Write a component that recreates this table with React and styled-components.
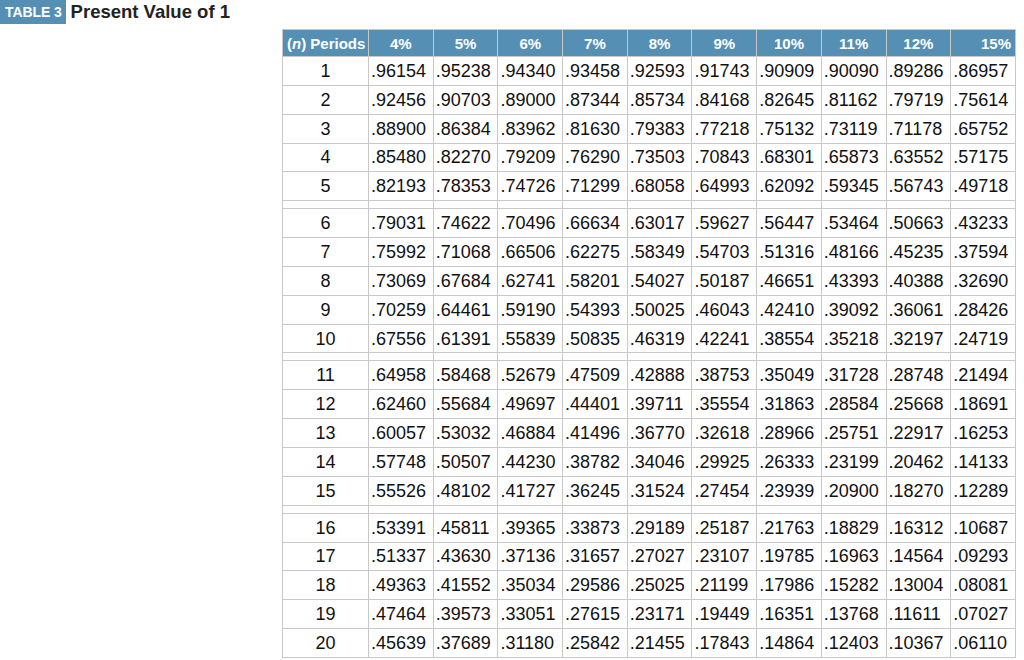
import styled, { createGlobalStyle } from "styled-components";

const GlobalStyle = createGlobalStyle`
  body {
    margin: 0;
    background: #ffffff;
    font-family: "Liberation Sans", Arial, Helvetica, sans-serif;
    color: #111;
  }
`;

const Page = styled.div`
  display: flex;
  flex-direction: column;
  gap: 5px;
  padding: 0 8px 0 0;
`;

const TitleBar = styled.div`
  display: flex;
  align-items: center;
  gap: 5px;
  height: 24px;
`;

const TableLabel = styled.span`
  display: flex;
  align-items: center;
  height: 24px;
  padding: 0 4px 0 5px;
  background: #5590b4;
  color: #fff;
  font-weight: bold;
  font-size: 14px;
  letter-spacing: -0.1px;
`;

const TitleText = styled.h1`
  margin: 0;
  font-size: 18.5px;
  font-weight: bold;
  color: #222;
`;

const Table = styled.table`
  margin-left: auto;
  width: 734px;
  border-collapse: collapse;
  table-layout: fixed;
  border: 1px solid #c8c8c8;
`;

const HeadCell = styled.th`
  height: 26px;
  padding: 0 4px;
  background: #5590b4;
  color: #fff;
  font-size: 15px;
  font-weight: bold;
  border: 1px solid #c8c8c8;
  text-align: ${(p) => p.$align || "center"};
  white-space: nowrap;
`;

const Row = styled.tr`
  height: 28.85px;
`;

const Cell = styled.td`
  font-size: 18px;
  border: 1px solid #c8c8c8;
  text-align: ${(p) => (p.$center ? "center" : "left")};
  white-space: nowrap;
  padding: 1px 0 0 ${(p) => (p.$center ? "0" : "2px")};
`;

const SpacerRow = styled.tr`
  height: 8px;
`;

const SpacerCell = styled.td`
  padding: 0;
  border: 1px solid #c8c8c8;
`;

const rates = ["4%", "5%", "6%", "7%", "8%", "9%", "10%", "11%", "12%", "15%"];

const data = [
  ".96154 .95238 .94340 .93458 .92593 .91743 .90909 .90090 .89286 .86957",
  ".92456 .90703 .89000 .87344 .85734 .84168 .82645 .81162 .79719 .75614",
  ".88900 .86384 .83962 .81630 .79383 .77218 .75132 .73119 .71178 .65752",
  ".85480 .82270 .79209 .76290 .73503 .70843 .68301 .65873 .63552 .57175",
  ".82193 .78353 .74726 .71299 .68058 .64993 .62092 .59345 .56743 .49718",
  ".79031 .74622 .70496 .66634 .63017 .59627 .56447 .53464 .50663 .43233",
  ".75992 .71068 .66506 .62275 .58349 .54703 .51316 .48166 .45235 .37594",
  ".73069 .67684 .62741 .58201 .54027 .50187 .46651 .43393 .40388 .32690",
  ".70259 .64461 .59190 .54393 .50025 .46043 .42410 .39092 .36061 .28426",
  ".67556 .61391 .55839 .50835 .46319 .42241 .38554 .35218 .32197 .24719",
  ".64958 .58468 .52679 .47509 .42888 .38753 .35049 .31728 .28748 .21494",
  ".62460 .55684 .49697 .44401 .39711 .35554 .31863 .28584 .25668 .18691",
  ".60057 .53032 .46884 .41496 .36770 .32618 .28966 .25751 .22917 .16253",
  ".57748 .50507 .44230 .38782 .34046 .29925 .26333 .23199 .20462 .14133",
  ".55526 .48102 .41727 .36245 .31524 .27454 .23939 .20900 .18270 .12289",
  ".53391 .45811 .39365 .33873 .29189 .25187 .21763 .18829 .16312 .10687",
  ".51337 .43630 .37136 .31657 .27027 .23107 .19785 .16963 .14564 .09293",
  ".49363 .41552 .35034 .29586 .25025 .21199 .17986 .15282 .13004 .08081",
  ".47464 .39573 .33051 .27615 .23171 .19449 .16351 .13768 .11611 .07027",
  ".45639 .37689 .31180 .25842 .21455 .17843 .14864 .12403 .10367 .06110",
].map((line) => line.split(" "));

export default function App() {
  const rows = [];
  data.forEach((values, i) => {
    const n = i + 1;
    rows.push(
      <Row key={n}>
        <Cell $center>{n}</Cell>
        {values.map((v, j) => (
          <Cell key={j}>{v}</Cell>
        ))}
      </Row>
    );
    // linha vazia entre os grupos de 5 periodos
    if (n % 5 === 0 && n < 20) {
      rows.push(
        <SpacerRow key={`s${n}`}>
          {Array.from({ length: 11 }).map((_, k) => (
            <SpacerCell key={k} />
          ))}
        </SpacerRow>
      );
    }
  });

  return (
    <>
      <GlobalStyle />
      <Page>
        <TitleBar>
          <TableLabel>TABLE 3</TableLabel>
          <TitleText>Present Value of 1</TitleText>
        </TitleBar>
        <Table>
          <colgroup>
            <col style={{ width: 86 }} />
            {rates.map((r) => (
              <col key={r} />
            ))}
          </colgroup>
          <thead>
            <tr>
              <HeadCell>
                (<i>n</i>) Periods
              </HeadCell>
              {rates.map((r, i) => (
                <HeadCell key={r} $align={i === rates.length - 1 ? "right" : "center"}>
                  {r}
                </HeadCell>
              ))}
            </tr>
          </thead>
          <tbody>{rows}</tbody>
        </Table>
      </Page>
    </>
  );
}
